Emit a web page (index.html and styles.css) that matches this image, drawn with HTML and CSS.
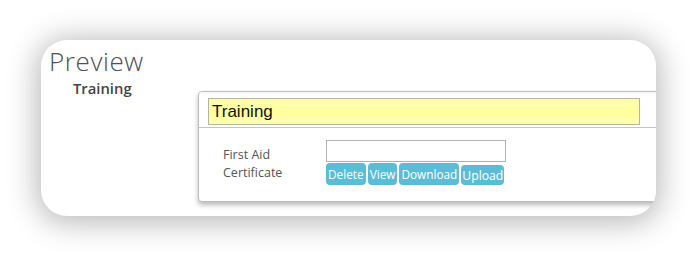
FILE: index.html
```html
<!DOCTYPE html>
<html>
<head>
<meta charset="utf-8">
<link rel="stylesheet" href="styles.css">
</head>
<body>
<div class="page">
  <div class="card">
    <h1 class="title">Preview</h1>
    <div class="subtitle">Training</div>
    <div class="panel">
      <div class="panel-head">
        <div class="name-field">Training</div>
      </div>
      <div class="panel-body">
        <div class="label">First Aid<br>Certificate</div>
        <div class="control">
          <div class="file-field"></div>
          <div class="buttons">
            <span class="btn">Delete</span>
            <span class="btn">View</span>
            <span class="btn">Download</span>
            <span class="btn btn-upload">Upload</span>
          </div>
        </div>
      </div>
    </div>
  </div>
</div>
</body>
</html>
```
FILE: styles.css
```css
html, body {
  margin: 0;
  padding: 0;
  background: #fff;
}
.page {
  width: 696px;
  height: 257px;
  padding: 40px 40px 0 41px;
  box-sizing: border-box;
}
.card {
  width: 615px;
  height: 176px;
  background: #fff;
  border-radius: 26px;
  box-shadow: 0 3px 30px 4px rgba(0, 0, 0, 0.28);
  overflow: hidden;
  padding: 6px 0 0 8px;
  box-sizing: border-box;
}
.title {
  margin: 0;
  font-family: "Open Sans", sans-serif;
  font-weight: 300;
  font-size: 26px;
  line-height: 30px;
  color: #4d5058;
  letter-spacing: 0.6px;
}
.subtitle {
  margin: 4px 0 0 24px;
  font-family: "Open Sans", sans-serif;
  font-weight: 600;
  font-size: 14.8px;
  line-height: 16px;
  color: #444;
}
.panel {
  margin: -5px 0 0 149px;
  width: 500px;
  height: 111px;
  border: 1px solid #bdbdbd;
  border-radius: 4px;
  box-sizing: border-box;
  background: #fff;
  box-shadow: 0 3px 5px rgba(0, 0, 0, 0.28);
}
.panel-head {
  padding: 6px 0 2px 9px;
  border-bottom: 1px solid #c4c4c4;
  background: linear-gradient(#f6f6f6, #fff 4px);
  border-radius: 4px 4px 0 0;
}
.name-field {
  width: 432px;
  height: 27px;
  box-sizing: border-box;
  border: 1px solid #b4b4a0;
  background: linear-gradient(#ffffb0, #ffff9c 60%, #ffffb8);
  font-family: "Liberation Sans", Arial, sans-serif;
  font-size: 17px;
  line-height: 25px;
  padding-left: 3px;
  color: #111;
}
.panel-body {
  display: flex;
  padding: 12px 0 0 24px;
}
.label {
  width: 103px;
  font-family: "Open Sans", sans-serif;
  font-size: 12.5px;
  line-height: 18px;
  color: #555;
  padding-top: 6px;
}
.control {
  display: flex;
  flex-direction: column;
}
.file-field {
  width: 180px;
  height: 22px;
  box-sizing: border-box;
  border: 1px solid #b0b0b0;
}
.buttons {
  display: flex;
  align-items: flex-end;
  gap: 2px;
  margin-top: 1px;
}
.btn {
  display: inline-block;
  background: #5bbcd5;
  color: #fff;
  font-family: "Open Sans", sans-serif;
  font-size: 11.8px;
  line-height: 22px;
  height: 22px;
  padding: 0 2px;
  border-radius: 4px;
}
.btn-upload {
  font-size: 12.2px;
  height: 20px;
  line-height: 22px;
  padding: 0 1px;
}
```
